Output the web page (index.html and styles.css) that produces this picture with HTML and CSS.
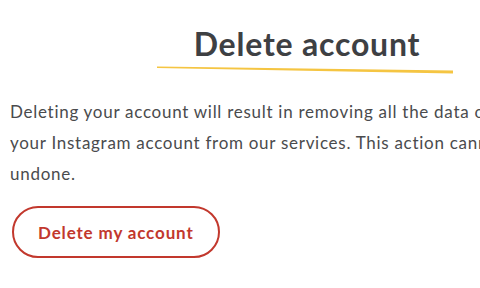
FILE: index.html
```html
<!DOCTYPE html>
<html>
<head>
<meta charset="utf-8">
<link rel="stylesheet" href="styles.css">
</head>
<body>
<section class="panel">
  <div class="title-wrap">
    <h1 class="title">Delete account</h1>
    <svg class="underline" width="298" height="10" viewBox="0 0 298 10">
      <path d="M0 2.6 L296 6.6 L296 9.4 L0 4 Z" fill="#f5c542"/>
    </svg>
  </div>
  <p class="text">Deleting your account will result in removing all the data of<br>your Instagram account from our services. This action cannot be undone.</p>
  <button class="btn">Delete my account</button>
</section>
</body>
</html>
```
FILE: styles.css
```css
html, body {
  margin: 0;
  padding: 0;
  background: #ffffff;
  overflow: hidden;
}
body {
  width: 480px;
  height: 288px;
  font-family: "Lato", sans-serif;
}
.panel {
  width: 594px;
  padding: 22px 0 0 10px;
  box-sizing: content-box;
}
.title-wrap {
  display: flex;
  flex-direction: column;
  align-items: center;
}
.title {
  margin: 0;
  font-size: 32px;
  line-height: 44px;
  font-weight: 700;
  letter-spacing: 0.8px;
  color: #3e4043;
}
.underline {
  display: block;
  margin-top: -2px;
  margin-right: 2px;
}
.text {
  margin: 22px 0 0 0;
  max-width: 560px;
  font-size: 17px;
  line-height: 31px;
  letter-spacing: 0.72px;
  color: #4a4b4d;
}
.btn {
  margin: 17px 0 0 2px;
  height: 52px;
  padding: 0 24px;
  border: 2px solid #c2382d;
  border-radius: 26px;
  background: #fff;
  color: #c2382d;
  font-family: "Lato", sans-serif;
  font-size: 17px;
  font-weight: 700;
  letter-spacing: 0.85px;
}
```
